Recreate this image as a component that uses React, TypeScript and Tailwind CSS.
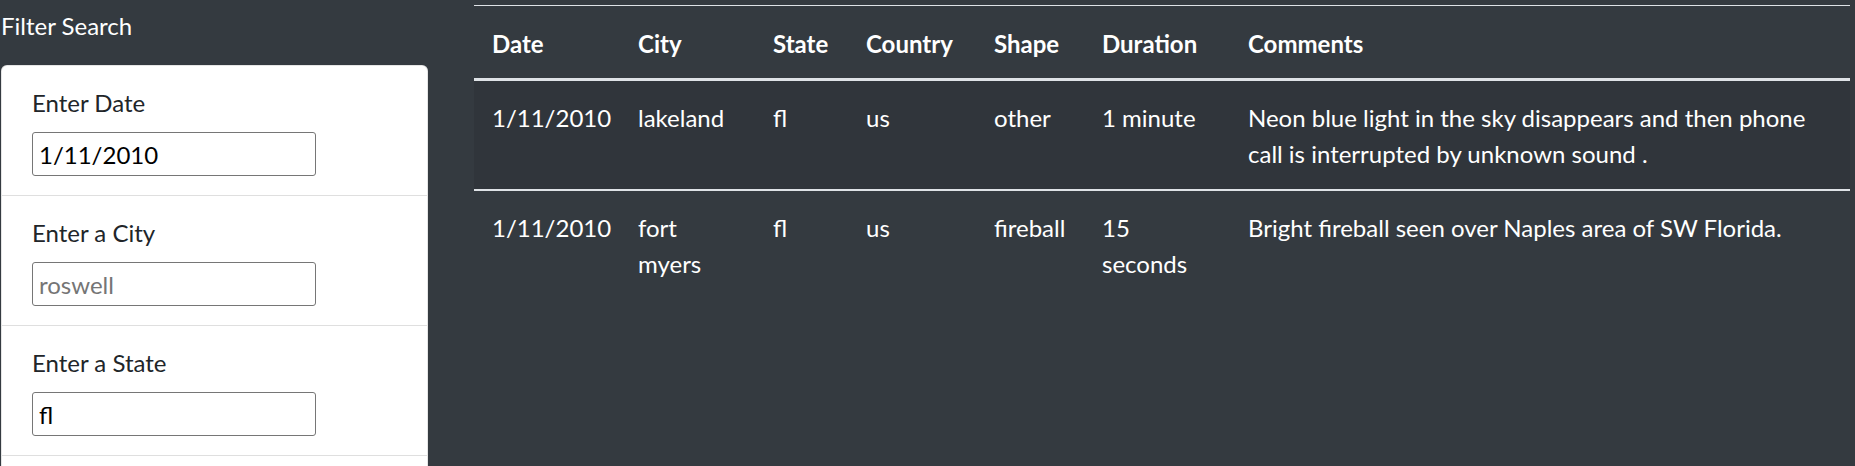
import React from "react";

const rows = [
  {
    date: "1/11/2010",
    city: "lakeland",
    state: "fl",
    country: "us",
    shape: "other",
    duration: "1 minute",
    comments:
      "Neon blue light in the sky disappears and then phone call is interrupted by unknown sound .",
  },
  {
    date: "1/11/2010",
    city: "fort myers",
    state: "fl",
    country: "us",
    shape: "fireball",
    duration: "15 seconds",
    comments: "Bright fireball seen over Naples area of SW Florida.",
  },
];

const fields = [
  { label: "Enter Date", value: "1/11/2010", placeholder: "" },
  { label: "Enter a City", value: "", placeholder: "roswell" },
  { label: "Enter a State", value: "fl", placeholder: "" },
  { label: "Enter a Country", value: "", placeholder: "us" },
];

export default function App() {
  return (
    <div className="flex h-[466px] w-full overflow-hidden bg-[#343a40] font-['Lato','Liberation_Sans',sans-serif] text-[24px] leading-[36px]">
      <aside className="flex w-[428px] shrink-0 flex-col pl-px">
        <div className="pt-[8px] text-white">Filter Search</div>
        <div className="mt-[21px] rounded-[6px] border border-black/10 bg-white">
          <ul>
            {fields.map((f, i) => (
              <li
                key={f.label}
                className={`px-[30px] pt-[18px] pb-[19px] ${i > 0 ? "border-t border-[#dfdfdf]" : ""}`}
              >
                <label className="mb-[12px] block pt-[2px] leading-[34px] text-[#212529]">{f.label}</label>
                <input
                  type="text"
                  defaultValue={f.value}
                  placeholder={f.placeholder}
                  className="block h-[44px] w-[284px] rounded-[3px] border border-[#767676] px-[6px] text-[24px] text-black placeholder:text-[#757575] focus:outline-none"
                />
              </li>
            ))}
          </ul>
        </div>
      </aside>
      <main className="ml-[46px] mt-[5px] w-[1376px] shrink-0">
        <table className="w-[1376px] table-fixed border-collapse text-left text-white">
          <colgroup>
            <col className="w-[146px]" />
            <col className="w-[135px]" />
            <col className="w-[93px]" />
            <col className="w-[128px]" />
            <col className="w-[108px]" />
            <col className="w-[146px]" />
            <col className="w-[620px]" />
          </colgroup>
          <thead>
            <tr className="border-t border-[#dee2e6]">
              {["Date", "City", "State", "Country", "Shape", "Duration", "Comments"].map((h) => (
                <th
                  key={h}
                  className="border-b-[3px] border-[#dee2e6] px-[18px] pt-[20px] pb-[16px] align-bottom font-bold"
                >
                  {h}
                </th>
              ))}
            </tr>
          </thead>
          <tbody>
            {rows.map((r, i) => (
              <tr
                key={i}
                className={`${i > 0 ? "border-t-2 border-[#dee2e6]" : ""} ${i % 2 === 0 ? "bg-[#30353b]" : ""}`}
              >
                {[r.date, r.city, r.state, r.country, r.shape, r.duration, r.comments].map((c, j) => (
                  <td key={j} className="px-[18px] pt-[19px] pb-[17px] align-top">
                    {c}
                  </td>
                ))}
              </tr>
            ))}
          </tbody>
        </table>
      </main>
    </div>
  );
}
